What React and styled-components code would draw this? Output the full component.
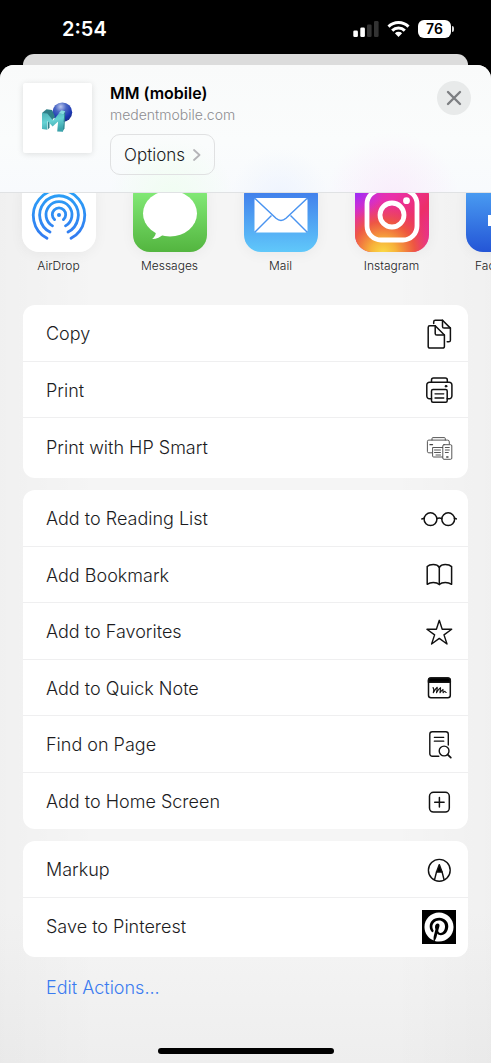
import React from "react"
import styled, { createGlobalStyle } from "styled-components"
import { FaPinterest } from "react-icons/fa"

const GlobalStyle = createGlobalStyle`
  * {
    box-sizing: border-box;
  }

  body {
    margin: 0;
    background-color: #000;
    color: #1c1c1e;
    font-family: Inter, "Liberation Sans", sans-serif;
    font-weight: 350;
  }

  button {
    font-family: inherit;
    font-weight: inherit;
    color: inherit;
    cursor: pointer;
  }
`

const Screen = styled.div`
  display: flex;
  flex-direction: column;
  min-height: 100vh;
  overflow: hidden;
`

const StatusBar = styled.div`
  display: flex;
  align-items: center;
  justify-content: space-between;
  height: 54px;
  padding: 4px 37px 0 62px;
  color: #fff;
`

const Clock = styled.time`
  font-size: 20px;
  font-weight: 600;
`

const StatusIcons = styled.div`
  display: flex;
  align-items: center;
  gap: 8px;
`

const Battery = styled.div`
  display: flex;
  align-items: center;
  gap: 1px;
`

const BatteryLevel = styled.span`
  width: 33px;
  border-radius: 6px;
  background-color: #fff;
  color: #000;
  font-size: 14px;
  font-weight: 600;
  line-height: 18px;
  text-align: center;
`

const BatteryTip = styled.span`
  width: 2px;
  height: 6px;
  border-radius: 0 2px 2px 0;
  background-color: #d8d8d8;
`

const BackSheet = styled.div`
  height: 11px;
  margin: 0 23px;
  border-radius: 11px 11px 0 0;
  background-color: #dcdcdc;
`

const Sheet = styled.main`
  display: flex;
  flex: 1;
  flex-direction: column;
  border-radius: 14px 14px 0 0;
  background: linear-gradient(
      90deg,
      rgba(0, 0, 0, 0.02),
      transparent 20%,
      transparent 80%,
      rgba(0, 0, 0, 0.02)
    ),
    linear-gradient(#f5f5f5 85%, #eeeeee);
`

const SheetHeader = styled.header`
  position: relative;
  z-index: 1;
  display: flex;
  align-items: flex-start;
  height: 128px;
  padding: 18px 20px 0 23px;
  border-bottom: 1px solid #e0e2e4;
  border-radius: 14px 14px 0 0;
  background: radial-gradient(
      circle at 80% 105%,
      rgba(250, 228, 250, 0.6),
      transparent 16%
    ),
    radial-gradient(
      circle at 57% 105%,
      rgba(232, 240, 255, 0.6),
      transparent 16%
    ),
    radial-gradient(
      circle at 35% 105%,
      rgba(236, 255, 236, 0.7),
      transparent 18%
    ),
    linear-gradient(#f9fafa, #fafcfc 60%, #f8fafd);
`

const SiteThumb = styled.div`
  width: 69px;
  height: 70px;
  border-radius: 2px;
  background-color: #fff;
  box-shadow: 0 1px 6px rgba(0, 0, 0, 0.12);
`

const SiteInfo = styled.div`
  flex: 1;
  padding-left: 18px;
`

const SiteTitle = styled.h1`
  margin: 0;
  color: #000;
  font-size: 16px;
  font-weight: 600;
  line-height: 21px;
`

const SiteUrl = styled.p`
  margin: 0 0 8px;
  color: #8d8d91;
  font-size: 14px;
  line-height: 22px;
`

const OptionsButton = styled.button`
  display: flex;
  align-items: center;
  gap: 8px;
  height: 41px;
  padding: 0 13px;
  border: 1px solid #e0e1e2;
  border-radius: 10px;
  background-color: transparent;
  font-size: 17px;
`

const CloseButton = styled.button`
  display: grid;
  place-items: center;
  width: 34px;
  height: 34px;
  margin-top: -2px;
  padding: 0;
  border: 0;
  border-radius: 50%;
  background-color: #e8eaea;
`

/* tucked under the header, the way a scrolled list is */
const AppStrip = styled.nav`
  display: flex;
  margin-top: -15px;
  padding-left: 3px;
  overflow: hidden;
`

const AppLink = styled.a`
  display: flex;
  flex: none;
  flex-direction: column;
  align-items: center;
  gap: 5px;
  width: 111px;
  color: #1c1c1e;
  font-size: 12px;
  line-height: 18px;
  text-decoration: none;
`

const AppTile = styled.svg`
  display: block;
  width: 74px;
  height: 74px;
  border-radius: 17px;
  box-shadow: 0 2px 14px rgba(0, 0, 0, 0.05);
`

const Actions = styled.div`
  display: flex;
  flex-direction: column;
  gap: 12px;
  margin: 30px 23px 0;
`

const Group = styled.ul`
  margin: 0;
  padding: 0 0 ${props => (props.$roomy ? "3px" : "0")};
  border-radius: 12px;
  background-color: #fff;
  list-style: none;
`

const Row = styled.li`
  height: 57px;
  border-bottom: 1px solid #efeff0;

  &:nth-child(even) {
    height: 56px;
  }

  &:last-child {
    border-bottom: 0;
  }
`

const RowButton = styled.button`
  display: flex;
  align-items: center;
  justify-content: space-between;
  width: 100%;
  height: 100%;
  padding: 1px 11px 0 23px;
  border: 0;
  background-color: transparent;
  font-size: 18px;
  text-align: left;
`

const RowIcon = styled.svg`
  flex: none;
  width: 36px;
  height: 36px;
  fill: none;
  stroke: #111;
  stroke-width: ${props => props.$weight || 1.5};
  stroke-linecap: round;
  stroke-linejoin: round;
`

const PinterestTile = styled.span`
  display: grid;
  place-items: center;
  width: 34px;
  height: 34px;
  margin-right: 1px;
  background-color: #000;
  color: #fff;
  font-size: 30px;
`

const EditLink = styled.a`
  align-self: flex-start;
  margin: 19px 46px 0;
  color: #3a7bf0;
  font-size: 18px;
  line-height: 24px;
  text-decoration: none;
`

const HomeIndicator = styled.div`
  align-self: center;
  width: 176px;
  height: 6px;
  margin: auto 0 9px;
  border-radius: 3px;
  background-color: #000;
`

const Signal = () => (
  <svg width="26" height="18" viewBox="0 0 26 18" fill="#fff">
    <rect x="0.3" y="10.5" width="4.6" height="6.5" rx="1.3" />
    <rect x="7.3" y="7.5" width="4.6" height="9.5" rx="1.3" />
    <rect x="14" y="4.5" width="4.6" height="12.5" rx="1.3" fill="#333" />
    <rect x="21" y="1" width="4.6" height="16" rx="1.3" fill="#333" />
  </svg>
)

const Wifi = () => (
  <svg width="23" height="18" viewBox="0 0 23 18" fill="none">
    <g stroke="#fff" strokeWidth="3">
      <path d="M1.5 6.6a14.3 14.3 0 0 1 20 0" />
      <path d="M5.2 10.6a9 9 0 0 1 12.6 0" />
    </g>
    <path d="M11.5 17l-3.6-3.7a5.2 5.2 0 0 1 7.2 0z" fill="#fff" />
  </svg>
)

const SiteLogo = () => (
  <svg width="69" height="70" viewBox="0 0 69 70">
    <defs>
      <radialGradient id="ball" cx="0.42" cy="0.22" r="0.8">
        <stop offset="0" stopColor="#b9c6ee" />
        <stop offset="0.35" stopColor="#4a66c4" />
        <stop offset="0.75" stopColor="#1a35b0" />
        <stop offset="1" stopColor="#1c2f80" />
      </radialGradient>
      <linearGradient id="teal" x1="0" y1="0" x2="0.3" y2="1">
        <stop offset="0" stopColor="#4fb2b8" />
        <stop offset="0.5" stopColor="#66d2d4" />
        <stop offset="1" stopColor="#3ba3ab" />
      </linearGradient>
    </defs>
    <circle cx="39.3" cy="29.3" r="9.9" fill="url(#ball)" />
    <path d="M19 30l4.500-3.700 5.500.7 3 6.500-3 4z" fill="#2f7f88" />
    <path d="M35.500 30.500l3-3.300 3.700 1-1 3z" fill="#86dcde" />
    <path d="M41 30.500l1.300-2.300-.8 17.300-2 3z" fill="#2f8791" />
    <path d="M25 46.300v-8.800l1.500 1.200v6z" fill="#2f7f88" />
    <path
      d="M19 30l5.300.6 5.700 7 6-7 5.200.6-1.200 17.500-5.800-.3.900-10-5.500 5-5-5.300-.2 8.600-5.400-.6z"
      fill="url(#teal)"
    />
  </svg>
)

const AirDropTile = () => (
  <AppTile viewBox="0 0 74 74">
    <defs>
      <linearGradient
        id="airdrop"
        gradientUnits="userSpaceOnUse"
        x1="0"
        y1="10"
        x2="0"
        y2="64"
      >
        <stop offset="0" stopColor="#2aa3f7" />
        <stop offset="1" stopColor="#3478f0" />
      </linearGradient>
    </defs>
    <rect width="74" height="74" fill="#fff" />
    <g
      fill="none"
      stroke="url(#airdrop)"
      strokeWidth="2.8"
      strokeLinecap="round"
    >
      <path d="M25 60.300a25.700 25.700 0 1 1 24 0" />
      <path d="M28 54.100a19.300 19.300 0 1 1 18 0" />
      <path d="M30.500 47.900a13 13 0 1 1 13 0" />
      <path d="M32.600 41.600a6.700 6.700 0 1 1 8.800 0" />
    </g>
    <circle cx="37" cy="37" r="2" fill="#2b88f3" />
  </AppTile>
)

const MessagesTile = () => (
  <AppTile viewBox="0 0 74 74">
    <defs>
      <linearGradient id="messages" x1="0" y1="0" x2="0" y2="1">
        <stop offset="0" stopColor="#8df583" />
        <stop offset="1" stopColor="#53b53f" />
      </linearGradient>
    </defs>
    <rect width="74" height="74" fill="url(#messages)" />
    <ellipse cx="37" cy="35.500" rx="27" ry="23" fill="#fff" />
    <path d="M23 52c.5 4-1.300 7-3.800 9 4 0 8.800-2 11.500-5z" fill="#fff" />
  </AppTile>
)

const MailTile = () => (
  <AppTile viewBox="0 0 74 74">
    <defs>
      <linearGradient id="mail" x1="0" y1="0" x2="0" y2="1">
        <stop offset="0" stopColor="#3a6fe8" />
        <stop offset="1" stopColor="#60c8fa" />
      </linearGradient>
    </defs>
    <rect width="74" height="74" fill="url(#mail)" />
    <rect x="10.500" y="20" width="53" height="34.500" rx="2" fill="#fff" />
    <g fill="none" stroke="#4a94f0" strokeWidth="1.500">
      <path d="M11 20.500l21 19.800q5 4.400 10 0l21-19.800" />
      <path d="M11 54l16.500-16.500" />
      <path d="M63 54L46.500 37.500" />
    </g>
  </AppTile>
)

const InstagramTile = () => (
  <AppTile viewBox="0 0 74 74">
    <defs>
      <linearGradient id="igBase" x1="0" y1="0.200" x2="0.900" y2="1">
        <stop offset="0" stopColor="#d52fd0" />
        <stop offset="0.350" stopColor="#ea30a8" />
        <stop offset="0.700" stopColor="#ec2f68" />
        <stop offset="1" stopColor="#e630a0" />
      </linearGradient>
      <radialGradient id="igGlow" cx="0.380" cy="1.020" r="0.720">
        <stop offset="0" stopColor="#fbdc45" />
        <stop offset="0.250" stopColor="#f7b23a" />
        <stop offset="0.600" stopColor="#ee5b3a" stopOpacity="0.900" />
        <stop offset="1" stopColor="#ea3a60" stopOpacity="0" />
      </radialGradient>
      <radialGradient id="igPurple" cx="0" cy="0.150" r="0.400">
        <stop offset="0" stopColor="#8a2bff" />
        <stop offset="1" stopColor="#c22fe8" stopOpacity="0" />
      </radialGradient>
    </defs>
    <rect width="74" height="74" fill="url(#igBase)" />
    <rect width="74" height="74" fill="url(#igGlow)" />
    <rect width="74" height="74" fill="url(#igPurple)" />
    <g fill="none" stroke="#fff" strokeWidth="4.800">
      <rect x="12" y="12" width="50" height="50" rx="14" />
      <circle cx="37" cy="37" r="12" />
    </g>
    <circle cx="51.500" cy="22.700" r="3.400" fill="#fff" />
  </AppTile>
)

const FacebookTile = () => (
  <AppTile viewBox="0 0 74 74">
    <defs>
      <linearGradient id="facebook" x1="0" y1="0" x2="0" y2="1">
        <stop offset="0" stopColor="#52acf8" />
        <stop offset="1" stopColor="#2455d6" />
      </linearGradient>
    </defs>
    <rect width="74" height="74" fill="url(#facebook)" />
    <path
      d="M32 74V48H22V37h10v-9q0-14 14-14h8v10h-6q-5 0-5 5v8h11l-2 11h-9v26z"
      fill="#fff"
    />
  </AppTile>
)

const CopyIcon = () => (
  <RowIcon viewBox="0 0 36 36">
    <path d="M8.800 9.800h5.400l9.200 9.200v11.500a1.600 1.600 0 0 1-1.600 1.600H8.800a1.600 1.600 0 0 1-1.600-1.600V11.400a1.600 1.600 0 0 1 1.600-1.600z" />
    <path d="M14.200 9.800v7.600a1.600 1.600 0 0 0 1.600 1.600h7.600" />
    <path d="M12.700 7.500V5.900A1.600 1.600 0 0 1 14.300 4.300h7.200l7.900 7.800v12.100a1.600 1.600 0 0 1-1.600 1.600h-1.600" />
    <path d="M21.500 4.300V10.500a1.600 1.600 0 0 0 1.600 1.600h6.300" />
  </RowIcon>
)

const PrintIcon = () => (
  <RowIcon viewBox="0 0 36 36">
    <path d="M10.500 26.700H8.500a2.700 2.700 0 0 1-2.700-2.700V13a2.700 2.700 0 0 1 2.700-2.700h19.700a2.700 2.700 0 0 1 2.700 2.700v11a2.700 2.700 0 0 1-2.700 2.700h-2" />
    <path d="M10.500 10V8a2 2 0 0 1 2-2h11.800a2 2 0 0 1 2 2v2" />
    <rect x="10.500" y="17.500" width="15.700" height="12.700" rx="1.500" />
    <path d="M14 21.800h8.800M14 26h8.800" strokeWidth="1.300" />
    <circle cx="25" cy="14.200" r="0.900" fill="#111" strokeWidth="1" />
  </RowIcon>
)

const HpSmartIcon = () => (
  <RowIcon viewBox="0 0 36 36" $weight={0.9}>
    <g stroke="#444">
      <path d="M11 11V9.600a1 1 0 0 1 1-1h11.300a1 1 0 0 1 1 1V11" />
      <path d="M11 23.800H7.800a1.400 1.400 0 0 1-1.400-1.400V12.500A1.400 1.400 0 0 1 7.800 11.100h18.700a1.800 1.800 0 0 1 1.800 1.800v2" />
      <path d="M21.500 28H12.600a1 1 0 0 1-1-1V18.500h10" />
      <path d="M13.500 21h6M13.500 23.500h6M15 26h4.500" />
      <path d="M9 15.700h2.500" strokeWidth="1.300" />
      <rect x="21.800" y="15.700" width="9" height="14.600" rx="1.200" />
      <path d="M24.300 18.500h4M24.300 21h4M24.300 23.500h3" />
      <path d="M25.700 28h1.300" strokeWidth="1.300" />
    </g>
  </RowIcon>
)

const GlassesIcon = () => (
  <RowIcon viewBox="0 0 36 36">
    <circle cx="9.500" cy="18.200" r="6.400" />
    <circle cx="27.200" cy="18.200" r="6.400" />
    <path d="M15.800 17.600q2.500-1 5 0M3.200 17.300L.8 17.900M33.500 17.300l2 .6" />
  </RowIcon>
)

const BookIcon = () => (
  <RowIcon viewBox="0 0 36 36">
    <path d="M18.300 10.300C17 8.300 15 7.500 12.300 7.500S7.500 8.200 6.200 9.600V27.300c1.500-1.200 3.500-1.900 6.100-1.900s4.600.7 6 2.200c1.400-1.500 3.400-2.200 6-2.200s4.600.7 6.300 1.900V9.600C29.200 8.200 27 7.500 24.300 7.500s-4.700.8-6 2.800z" />
    <path d="M18.300 10.300v17" />
  </RowIcon>
)

const StarIcon = () => (
  <RowIcon viewBox="0 0 36 36" $weight={1.4}>
    <path d="M18.300 6.300l2.900 9h9.500l-7.700 5.600 3 9.100-7.700-5.600L10.600 30l3-9.100-7.700-5.600h9.500z" />
  </RowIcon>
)

const QuickNoteIcon = () => (
  <RowIcon viewBox="0 0 36 36">
    <rect x="7.500" y="8" width="21.800" height="19.800" rx="2.500" />
    <path
      d="M7.500 12.300V10.500A2.500 2.500 0 0 1 10 8h16.800a2.500 2.500 0 0 1 2.500 2.500v1.800z"
      fill="#000"
    />
    <path
      d="M12 17.500c1.300 1.200.9 3 .3 5.200 1.200-2.200 2.300-4.200 3.900-5.400.4 1.800-.7 3.600-.7 5.400 1.200-2.200 2.400-3.900 4-5 .3 1.700-.6 3.300-.5 5 .8-1.500 1.700-2.600 3-3.300.1 1.200-.3 2.300.2 3.300.6-.6 1-1.200 1.700-1.500.2.700.5 1.300 1.300 1.300"
      strokeWidth="1.100"
    />
  </RowIcon>
)

const FindIcon = () => (
  <RowIcon viewBox="0 0 36 36" $weight={1.4}>
    <path d="M17.800 29.300H11.300a2.500 2.500 0 0 1-2.500-2.500V7.300a2.500 2.500 0 0 1 2.500-2.500h13.500a2.500 2.500 0 0 1 2.500 2.500V18" />
    <path d="M13.300 10.300h9.500M13.300 14.200h9.500" strokeWidth="1.200" />
    <circle cx="23.100" cy="24" r="4.900" />
    <path d="M26.700 27.600l3.100 3" strokeWidth="1.800" />
  </RowIcon>
)

const HomeScreenIcon = () => (
  <RowIcon viewBox="0 0 36 36">
    <rect x="8.500" y="8.300" width="19.800" height="19.800" rx="4" />
    <path d="M18.400 13.500v9.400M13.700 18.200h9.400" />
  </RowIcon>
)

const MarkupIcon = () => (
  <RowIcon viewBox="0 0 36 36" $weight={1.4}>
    <circle cx="18.300" cy="18.300" r="10.900" />
    <path d="M15.500 20l2.800-7.400 2.800 7.400z" fill="#000" />
    <path d="M15.500 20l-1.900 7.500M21.100 20l1.900 7.500" />
  </RowIcon>
)

const PinterestIcon = () => (
  <PinterestTile>
    <FaPinterest />
  </PinterestTile>
)

const apps = [
  { name: "AirDrop", Tile: AirDropTile },
  { name: "Messages", Tile: MessagesTile },
  { name: "Mail", Tile: MailTile },
  { name: "Instagram", Tile: InstagramTile },
  { name: "Facebook", Tile: FacebookTile },
]

const groups = [
  {
    id: "page",
    roomy: true,
    rows: [
      { label: "Copy", Icon: CopyIcon },
      { label: "Print", Icon: PrintIcon },
      { label: "Print with HP Smart", Icon: HpSmartIcon },
    ],
  },
  {
    id: "browser",
    rows: [
      { label: "Add to Reading List", Icon: GlassesIcon },
      { label: "Add Bookmark", Icon: BookIcon },
      { label: "Add to Favorites", Icon: StarIcon },
      { label: "Add to Quick Note", Icon: QuickNoteIcon },
      { label: "Find on Page", Icon: FindIcon },
      { label: "Add to Home Screen", Icon: HomeScreenIcon },
    ],
  },
  {
    id: "extensions",
    roomy: true,
    rows: [
      { label: "Markup", Icon: MarkupIcon },
      { label: "Save to Pinterest", Icon: PinterestIcon },
    ],
  },
]

const App = () => (
  <>
    <GlobalStyle />
    <Screen>
      <StatusBar>
        <Clock>2:54</Clock>
        <StatusIcons>
          <Signal />
          <Wifi />
          <Battery>
            <BatteryLevel>76</BatteryLevel>
            <BatteryTip />
          </Battery>
        </StatusIcons>
      </StatusBar>
      <BackSheet />
      <Sheet>
        <SheetHeader>
          <SiteThumb>
            <SiteLogo />
          </SiteThumb>
          <SiteInfo>
            <SiteTitle>MM (mobile)</SiteTitle>
            <SiteUrl>medentmobile.com</SiteUrl>
            <OptionsButton type="button">
              Options
              <svg width="8" height="14" viewBox="0 0 8 14" fill="none">
                <path
                  d="M1 2l5.500 5L1 12"
                  stroke="#b4b4b8"
                  strokeWidth="1.800"
                  strokeLinecap="round"
                  strokeLinejoin="round"
                />
              </svg>
            </OptionsButton>
          </SiteInfo>
          <CloseButton type="button" aria-label="Close">
            <svg width="16" height="16" viewBox="0 0 16 16">
              <path
                d="M2 2l12 12M14 2L2 14"
                stroke="#7d7f82"
                strokeWidth="2.400"
                strokeLinecap="round"
              />
            </svg>
          </CloseButton>
        </SheetHeader>
        <AppStrip>
          {apps.map(({ name, Tile }) => (
            <AppLink key={name} href={`#${name.toLowerCase()}`}>
              <Tile />
              {name}
            </AppLink>
          ))}
        </AppStrip>
        <Actions>
          {groups.map(({ id, roomy, rows }) => (
            <Group key={id} $roomy={roomy}>
              {rows.map(({ label, Icon }) => (
                <Row key={label}>
                  <RowButton type="button">
                    {label}
                    <Icon />
                  </RowButton>
                </Row>
              ))}
            </Group>
          ))}
        </Actions>
        <EditLink href="#edit">Edit Actions...</EditLink>
        <HomeIndicator />
      </Sheet>
    </Screen>
  </>
)

export default App
